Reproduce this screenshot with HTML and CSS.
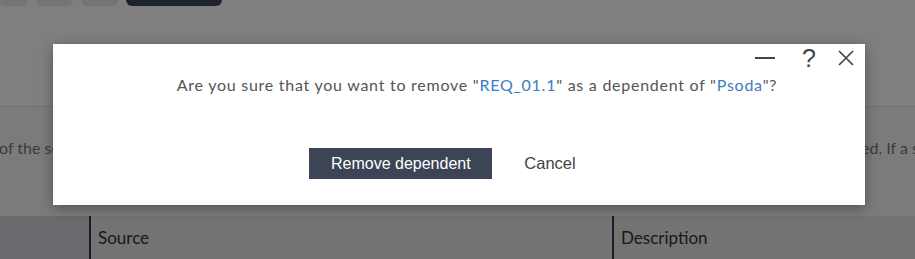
FILE: index.html
```html
<!DOCTYPE html>
<html>
<head>
<meta charset="utf-8">
<link rel="stylesheet" href="styles.css">
</head>
<body>
<div class="page">
  <div class="toolbar">
    <div class="tab t1"></div>
    <div class="tab t2"></div>
    <div class="tab t3"></div>
    <div class="tab dark"></div>
  </div>
  <div class="header-space"></div>
  <div class="content">
    <p class="intro"><span>of the selected requirement are listed.</span><span class="tail">ed. If a s</span></p>
    <div class="table-head">
      <div class="cell first"></div>
      <div class="cell source">Source</div>
      <div class="cell desc">Description</div>
    </div>
  </div>
</div>
<div class="overlay"></div>
<div class="dialog">
  <div class="controls">
    <svg class="ico" width="20" height="20" viewBox="0 0 20 20"><line x1="0" y1="10" x2="20" y2="10" stroke="#444" stroke-width="2"/></svg>
    <span class="help">?</span>
    <svg class="ico" width="16" height="16" viewBox="0 0 16 16"><path d="M1 1 L15 15 M15 1 L1 15" stroke="#444" stroke-width="1.7" fill="none"/></svg>
  </div>
  <p class="msg">Are you sure that you want to remove "<span class="ref">REQ_01.1</span>" as a dependent of "<span class="ref">Psoda</span>"?</p>
  <div class="actions">
    <button class="primary">Remove dependent</button>
    <button class="link">Cancel</button>
  </div>
</div>
</body>
</html>
```
FILE: styles.css
```css
html, body { margin: 0; padding: 0; }
body { width: 915px; height: 259px; overflow: hidden; position: relative; background: #fff; font-family: Lato, "Open Sans", sans-serif; }
.page { width: 915px; height: 259px; display: flex; flex-direction: column; }
.toolbar { display: flex; height: 6px; gap: 8px; margin-left: -1px; }
.tab { height: 6px; background: #e8e8e8; border-radius: 0 0 6px 6px; }
.t1 { width: 29px; }
.t2 { width: 37px; }
.t3 { width: 37px; }
.tab.dark { width: 96px; background: #3c4456; }
.header-space { height: 100px; border-bottom: 1px solid #e2e2e2; }
.content { flex: 1; background: #f6f6f6; display: flex; flex-direction: column; }
.intro { margin: 31px 0 0 0; height: 20px; display: flex; justify-content: space-between; font-size: 16px; color: #777; line-height: 20px; white-space: nowrap; overflow: hidden; }
.intro span:first-child { margin-left: -1px; }
.intro .tail { margin-right: -4px; }
.table-head { margin-top: 58px; display: flex; flex: 1; background: #e6e6e6; }
.cell { display: flex; align-items: center; font-size: 17px; color: #333; font-family: Lato, sans-serif; }
.first { width: 89px; background: #d5d7df; border-right: 2px solid #343850; }
.source { width: 514px; padding-left: 7px; border-right: 2px solid #343850; }
.desc { padding-left: 7px; }
.overlay { position: absolute; inset: 0; background: rgba(0,0,0,0.5); }
.dialog { position: absolute; left: 53px; top: 44px; width: 812px; height: 161px; background: #fff; box-shadow: 0 3px 12px rgba(0,0,0,0.35); display: flex; flex-direction: column; align-items: center; }
.controls { align-self: flex-end; display: flex; align-items: center; height: 28px; margin-top: 0; margin-right: 11px; }
.controls .ico:first-child { margin-right: 27px; }
.help { font-family: "Liberation Sans", Arial, sans-serif; font-size: 25px; color: #444; line-height: 28px; margin-right: 22px; }
.msg { margin: 1px 0 0 36px; font-size: 16px; color: #555; line-height: 24px; letter-spacing: 0.74px; }
.ref { color: #3c7cc0; }
.actions { margin-top: 51px; display: flex; gap: 24px; align-items: center; margin-left: -25px; }
button { font-family: "Liberation Sans", Arial, sans-serif; font-size: 16px; border: 0; cursor: pointer; }
.primary { background: #3c4456; color: #fff; width: 183px; height: 31px; }
.link { background: transparent; color: #444; padding: 0 8px; font-size: 16.5px; }
```
